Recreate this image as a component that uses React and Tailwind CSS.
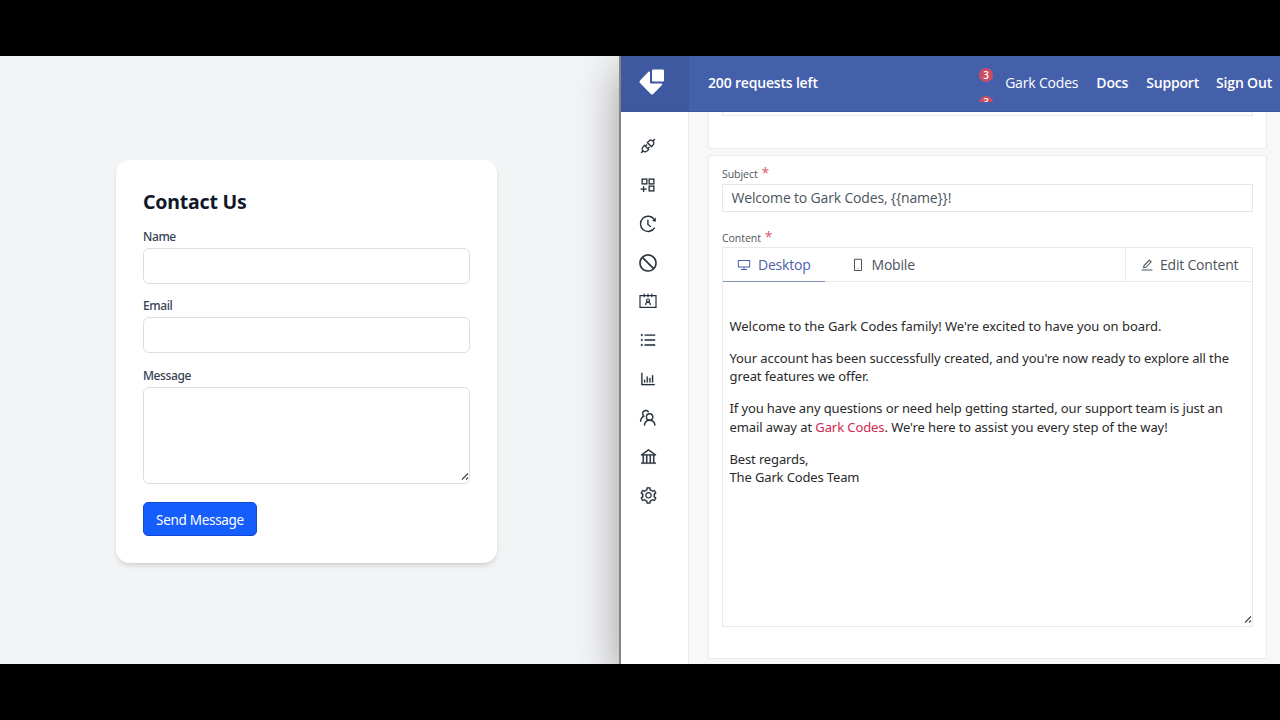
import {
  AiOutlineApi,
  AiOutlineAppstoreAdd,
  AiOutlineBank,
  AiOutlineBarChart,
  AiOutlineDesktop,
  AiOutlineEdit,
  AiOutlineMobile,
  AiOutlineSetting,
  AiOutlineStop,
  AiOutlineUnorderedList,
} from "react-icons/ai";

function HistoryIcon() {
  return (
    <svg width="18" height="18" viewBox="0 0 18 18" fill="none" stroke="currentColor" strokeWidth="1.4">
      <path d="M15.4 4.600A7.600 7.600 0 1 0 15.700 12.600" />
      <path d="M8.900 4.700v4.800l3 2.200" />
      <path d="M16.800 2.600v4.200l-3.600-.8z" fill="currentColor" stroke="none" />
    </svg>
  );
}

function ContactsIcon() {
  return (
    <svg width="18" height="18" viewBox="0 0 18 18" fill="none" stroke="currentColor" strokeWidth="1.2">
      <path d="M1 3.6h16v11.8H1z" />
      <path d="M5.2 1.8v3.4M9 1.8v3.4M12.8 1.8v3.4" />
      <circle cx="9" cy="8.5" r="1.5" />
      <path d="M6.6 13c.2-1.9 1-2.8 2.4-2.8s2.2.9 2.4 2.8" />
    </svg>
  );
}

function PeopleIcon() {
  return (
    <svg width="18" height="18" viewBox="0 0 18 18" fill="none" stroke="currentColor" strokeWidth="1.4">
      <circle cx="10.6" cy="8" r="3.2" />
      <path d="M5.400 16.600c.2-3.400 2.300-5.400 5.200-5.400s5.200 2 5.400 5.400" />
      <path d="M9.7 3.2A3.200 3.200 0 1 0 4.8 7.1C2.8 8.200 1.700 9.800 1.500 12.800" />
    </svg>
  );
}

function Logo() {
  return (
    <svg width="28" height="28" viewBox="0 0 28 28" fill="#fff">
      <rect x="14" y="1.5" width="12" height="12" rx="1.2" />
      <path d="M12 4.3V14.2c0 .9.5 1.4 1.4 1.4h9.9c1 0 1.3.9.7 1.5l-8.8 8.8a1.7 1.7 0 0 1-2.4 0L2 15a1.7 1.7 0 0 1 0-2.4l8.5-8.9c.6-.6 1.5-.3 1.5.6z" />
    </svg>
  );
}

function ResizeGrip() {
  return (
    <svg className="absolute right-0 bottom-[3px]" width="8" height="8" viewBox="0 0 8 8" stroke="#444" strokeWidth="1.1">
      <path d="M1 7.5 7 1.5M5 7.5 7 5.5" />
    </svg>
  );
}

const MENU = [
  { Icon: AiOutlineApi, size: 18 },
  { Icon: AiOutlineAppstoreAdd, size: 18 },
  { Icon: HistoryIcon, size: 18 },
  { Icon: AiOutlineStop, size: 20 },
  { Icon: ContactsIcon, size: 18 },
  { Icon: AiOutlineUnorderedList, size: 18 },
  { Icon: AiOutlineBarChart, size: 18 },
  { Icon: PeopleIcon, size: 18 },
  { Icon: AiOutlineBank, size: 19 },
  { Icon: AiOutlineSetting, size: 19 },
];

function Field({ label, className }) {
  return (
    <div>
      <p className="mb-[2px] text-[12px] leading-[18px] font-medium tracking-[-0.4px] text-[#364153]">{label}</p>
      <div className={`relative rounded-[6px] border border-[#dcdee2] ${className}`}>
        {label === "Message" && <ResizeGrip />}
      </div>
    </div>
  );
}

function ContactForm() {
  return (
    <section className="w-[619px] shrink-0 bg-[#f3f4f6] pt-[104px] pl-[116px] font-['Noto_Sans',sans-serif]">
      <div className="h-[403px] w-[381px] rounded-[14px] bg-white px-[27px] pt-[28px] shadow-md">
        <h1 className="mb-[12px] text-[19.5px] leading-[28px] font-bold tracking-[-0.2px] text-[#101828]">Contact Us</h1>
        <div className="flex flex-col gap-[13.4px]">
          <Field label="Name" className="h-[36px]" />
          <Field label="Email" className="h-[36px]" />
          <Field label="Message" className="h-[97px]" />
        </div>
        <button
          type="button"
          className="mt-[18px] h-[34px] w-[114px] rounded-[5px] border border-[#1049d6] bg-[#155dfc] pt-0.5 text-[13.5px] tracking-[-0.3px] text-white"
        >
          Send Message
        </button>
      </div>
    </section>
  );
}

function Header() {
  return (
    <header className="flex h-14 shrink-0 border-b border-[#3d559c] bg-[#4560ab] text-[14px] font-semibold tracking-[-0.18px] text-white">
      <div className="flex w-[68px] shrink-0 items-center bg-[#3e599f] pb-1 pl-[17px]">
        <Logo />
      </div>
      <div className="flex flex-1 items-center pr-2 pb-[3px] pl-[19px] whitespace-nowrap">
        <span>200 requests left</span>
        <div className="mt-[6px] ml-auto flex h-[34px] w-[14px] flex-col gap-[13.5px] overflow-hidden text-[10px]">
          {[0, 1].map((i) => (
            <span key={i} className="flex h-[14px] w-[14px] shrink-0 items-center justify-center rounded-full bg-[#cc4d62]">
              3
            </span>
          ))}
        </div>
        <span className="ml-[12px] font-normal">Gark Codes</span>
        <span className="ml-[18px]">Docs</span>
        <span className="ml-[18px]">Support</span>
        <span className="ml-[17px]">Sign Out</span>
      </div>
    </header>
  );
}

function Label({ children }) {
  return (
    <p className="flex h-[18px] gap-1 text-[10.6px] leading-[18px] tracking-[-0.1px] text-[#50575e]">
      {children}
      <span className="text-[14px] leading-[16px] text-[#e0566b]">*</span>
    </p>
  );
}

function EmailPreview() {
  return (
    <div className="relative h-[344px] px-[6.5px] pt-[35px] font-['Noto_Sans',sans-serif] text-[13px] leading-[18.3px] tracking-[-0.1px] whitespace-nowrap text-[#2a2a2a]">
      <p className="tracking-[-0.03px]">Welcome to the Gark Codes family! We're excited to have you on board.</p>
      <p className="mt-[13.7px]">
        Your account has been successfully created, and you're now ready to explore all the
        <br />
        great features we offer.
      </p>
      <p className="mt-[13.7px] tracking-[-0.12px]">
        If you have any questions or need help getting started, our support team is just an
        <br />
        <span className="tracking-[-0.09px]">
          email away at <span className="text-[#d0284f]">Gark Codes</span>. We're here to assist you every step of the way!
        </span>
      </p>
      <p className="mt-[13.7px] tracking-[-0.14px]">
        Best regards,
        <br />
        The Gark Codes Team
      </p>
      <ResizeGrip />
    </div>
  );
}

function Editor() {
  return (
    <main className="min-w-0 flex-1 border-l border-[#ebebeb] bg-[#f8f8f8] pr-[13px] pl-[19px]">
      <div className="h-[37px] border border-t-0 border-[#ebebeb] bg-white px-[13px]">
        <div className="h-[4px] border border-t-0 border-[#e5e9ee]" />
      </div>
      <div className="mt-[6px] h-[504px] border border-[#ebebeb] bg-white px-[13px] pt-[9px]">
        <Label>Subject</Label>
        <div className="mt-[1px] flex h-[28px] items-center border border-[#e6e6e6] px-[8.5px] pb-[2px] text-[14px] tracking-[-0.17px] text-[#4b545c]">
          {"Welcome to Gark Codes, {{name}}!"}
        </div>
        <div className="mt-[17px]">
          <Label>Content</Label>
        </div>
        <div className="border border-[#e8e8e8]">
          <div className="flex h-[34px] border-b border-[#e8e8e8] text-[14px] tracking-[-0.2px] text-[#4b545c]">
            <div className="flex h-[34px] w-[102px] items-center gap-[7px] border-b border-[#8792ba] pl-[14px] text-[#4c60aa]">
              <AiOutlineDesktop size={14} />
              Desktop
            </div>
            <div className="flex items-center gap-[7px] pl-[25.5px]">
              <AiOutlineMobile size={14} />
              Mobile
            </div>
            <div className="ml-auto flex w-[127px] items-center gap-[6px] border-l border-[#e8e8e8] pl-[14px] whitespace-nowrap">
              <AiOutlineEdit size={14} />
              Edit Content
            </div>
          </div>
          <EmailPreview />
        </div>
      </div>
    </main>
  );
}

export default function App() {
  return (
    <div className="h-[720px] w-[1280px] overflow-hidden bg-black py-14">
      <div className="flex h-[608px] overflow-hidden">
        <ContactForm />
        <div className="z-10 flex w-[661px] shrink-0 flex-col border-l-2 border-[#858585] bg-white font-['Open_Sans',sans-serif] shadow-[0_14px_40px_0_rgba(0,0,0,0.36)]">
          <Header />
          <div className="flex flex-1">
            <nav className="flex w-[67px] shrink-0 flex-col items-center pt-[15px] pr-[13px] text-[#27303c]">
              {MENU.map(({ Icon, size }, i) => (
                <div key={i} className="flex h-[38.75px] items-center">
                  <Icon size={size} strokeWidth={8} />
                </div>
              ))}
            </nav>
            <Editor />
          </div>
        </div>
      </div>
    </div>
  );
}
